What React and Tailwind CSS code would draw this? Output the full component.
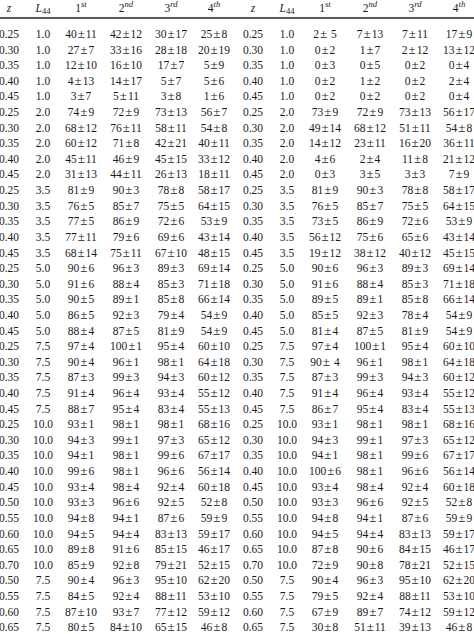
import React from "react";

const colunas = "grid grid-cols-[34px_34px_42px_48px_42px_44px_34px_34px_42px_48px_42px_46px]";

const esquerda = [
  ["0.25", "1.0", "40±11", "42±12", "30±17", "25±8"],
  ["0.30", "1.0", "27±7", "33±16", "28±18", "20±19"],
  ["0.35", "1.0", "12±10", "16±10", "17±7", "5±9"],
  ["0.40", "1.0", "4±13", "14±17", "5±7", "5±6"],
  ["0.45", "1.0", "3±7", "5±11", "3±8", "1±6"],
  ["0.25", "2.0", "74±9", "72±9", "73±13", "56±7"],
  ["0.30", "2.0", "68±12", "76±11", "58±11", "54±8"],
  ["0.35", "2.0", "60±12", "71±8", "42±21", "40±11"],
  ["0.40", "2.0", "45±11", "46±9", "45±15", "33±12"],
  ["0.45", "2.0", "31±13", "44±11", "26±13", "18±11"],
  ["0.25", "3.5", "81±9", "90±3", "78±8", "58±17"],
  ["0.30", "3.5", "76±5", "85±7", "75±5", "64±15"],
  ["0.35", "3.5", "77±5", "86±9", "72±6", "53±9"],
  ["0.40", "3.5", "77±11", "79±6", "69±6", "43±14"],
  ["0.45", "3.5", "68±14", "75±11", "67±10", "48±15"],
  ["0.25", "5.0", "90±6", "96±3", "89±3", "69±14"],
  ["0.30", "5.0", "91±6", "88±4", "85±3", "71±18"],
  ["0.35", "5.0", "90±5", "89±1", "85±8", "66±14"],
  ["0.40", "5.0", "86±5", "92±3", "79±4", "54±9"],
  ["0.45", "5.0", "88±4", "87±5", "81±9", "54±9"],
  ["0.25", "7.5", "97±4", "100±1", "95±4", "60±10"],
  ["0.30", "7.5", "90±4", "96±1", "98±1", "64±18"],
  ["0.35", "7.5", "87±3", "99±3", "94±3", "60±12"],
  ["0.40", "7.5", "91±4", "96±4", "93±4", "55±12"],
  ["0.45", "7.5", "88±7", "95±4", "83±4", "55±13"],
  ["0.25", "10.0", "93±1", "98±1", "98±1", "68±16"],
  ["0.30", "10.0", "94±3", "99±1", "97±3", "65±12"],
  ["0.35", "10.0", "94±1", "98±1", "99±6", "67±17"],
  ["0.40", "10.0", "99±6", "98±1", "96±6", "56±14"],
  ["0.45", "10.0", "93±4", "98±4", "92±4", "60±18"],
  ["0.50", "10.0", "93±3", "96±6", "92±5", "52±8"],
  ["0.55", "10.0", "94±8", "94±1", "87±6", "59±9"],
  ["0.60", "10.0", "94±5", "94±4", "83±13", "59±17"],
  ["0.65", "10.0", "89±8", "91±6", "85±15", "46±17"],
  ["0.70", "10.0", "85±9", "92±8", "79±21", "52±15"],
  ["0.50", "7.5", "90±4", "96±3", "95±10", "62±20"],
  ["0.55", "7.5", "84±5", "92±4", "88±11", "53±10"],
  ["0.60", "7.5", "87±10", "93±7", "77±12", "59±12"],
  ["0.65", "7.5", "80±5", "84±10", "65±15", "46±8"],
];

const direita = [
  ["0.25", "1.0", "2± 5", "7±13", "7±11", "17±9"],
  ["0.30", "1.0", "0±2", "1±7", "2±12", "13±12"],
  ["0.35", "1.0", "0±3", "0±5", "0±2", "0±4"],
  ["0.40", "1.0", "0±2", "1±2", "0±2", "2±4"],
  ["0.45", "1.0", "0±2", "0±2", "0±2", "0±4"],
  ["0.25", "2.0", "73±9", "72±9", "73±13", "56±17"],
  ["0.30", "2.0", "49±14", "68±12", "51±11", "54±8"],
  ["0.35", "2.0", "14±12", "23±11", "16±20", "36±11"],
  ["0.40", "2.0", "4±6", "2±4", "11±8", "21±12"],
  ["0.45", "2.0", "0±3", "3±5", "3±3", "7±9"],
  ["0.25", "3.5", "81±9", "90±3", "78±8", "58±17"],
  ["0.30", "3.5", "76±5", "85±7", "75±5", "64±15"],
  ["0.35", "3.5", "73±5", "86±9", "72±6", "53±9"],
  ["0.40", "3.5", "56±12", "75±6", "65±6", "43±14"],
  ["0.45", "3.5", "19±12", "38±12", "40±12", "45±15"],
  ["0.25", "5.0", "90±6", "96±3", "89±3", "69±14"],
  ["0.30", "5.0", "91±6", "88±4", "85±3", "71±18"],
  ["0.35", "5.0", "89±5", "89±1", "85±8", "66±14"],
  ["0.40", "5.0", "85±5", "92±3", "78±4", "54±9"],
  ["0.45", "5.0", "81±4", "87±5", "81±9", "54±9"],
  ["0.25", "7.5", "97±4", "100±1", "95±4", "60±10"],
  ["0.30", "7.5", "90± 4", "96±1", "98±1", "64±18"],
  ["0.35", "7.5", "87±3", "99±3", "94±3", "60±12"],
  ["0.40", "7.5", "91±4", "96±4", "93±4", "55±12"],
  ["0.45", "7.5", "86±7", "95±4", "83±4", "55±13"],
  ["0.25", "10.0", "93±1", "98±1", "98±1", "68±16"],
  ["0.30", "10.0", "94±3", "99±1", "97±3", "65±12"],
  ["0.35", "10.0", "94±1", "98±1", "99±6", "67±17"],
  ["0.40", "10.0", "100±6", "98±1", "96±6", "56±14"],
  ["0.45", "10.0", "93±4", "98±4", "92±4", "60±18"],
  ["0.50", "10.0", "93±3", "96±6", "92±5", "52±8"],
  ["0.55", "10.0", "94±8", "94±1", "87±6", "59±9"],
  ["0.60", "10.0", "94±5", "94±4", "83±13", "59±17"],
  ["0.65", "10.0", "87±8", "90±6", "84±15", "46±17"],
  ["0.70", "10.0", "72±9", "90±8", "78±21", "52±15"],
  ["0.50", "7.5", "90±4", "96±3", "95±10", "62±20"],
  ["0.55", "7.5", "79±5", "92±4", "88±11", "53±10"],
  ["0.60", "7.5", "67±9", "89±7", "74±12", "59±12"],
  ["0.65", "7.5", "30±8", "51±11", "39±13", "46±8"],
];

function Valor({ texto }) {
  if (!texto.includes("±")) return <span>{texto}</span>;
  const [a, b] = texto.split("±");
  return (
    <span>
      {a}
      <span className="mx-[1px] text-[13px] leading-none">±</span>
      {b}
    </span>
  );
}

function Cabecalho() {
  const ordinais = [
    ["1", "st"],
    ["2", "nd"],
    ["3", "rd"],
    ["4", "th"],
  ];
  const metade = (
    <>
      <div className="flex items-center justify-center italic">z</div>
      <div className="flex items-center justify-center">
        <span className="italic">L</span>
        <sub>44</sub>
      </div>
      {ordinais.map(([n, s]) => (
        <div key={n} className="flex items-center justify-center">
          {n}
          <sup className="italic">{s}</sup>
        </div>
      ))}
    </>
  );
  return (
    <div className={`${colunas} h-[15px]`}>
      {metade}
      {metade}
    </div>
  );
}

export default function App() {
  return (
    <div
      className="w-[474px] h-[634px] overflow-hidden bg-white text-[#1a1a1a] text-[11.5px]"
      style={{ fontFamily: '"Liberation Serif", "DejaVu Serif", serif' }}
    >
      <div className="ml-[-8px] w-[490px]">
        <Cabecalho />
        <div className="mt-[2px] h-[2px] bg-[#5a5a5a]" />
        <div className="mt-[7px]">
          {esquerda.map((linha, i) => (
            <div key={i} className={`${colunas} h-[15.62px]`}>
              {[...linha, ...direita[i]].map((celula, j) => (
                <div
                  key={j}
                  className="flex items-center justify-center whitespace-nowrap"
                >
                  <Valor texto={celula} />
                </div>
              ))}
            </div>
          ))}
        </div>
      </div>
    </div>
  );
}
